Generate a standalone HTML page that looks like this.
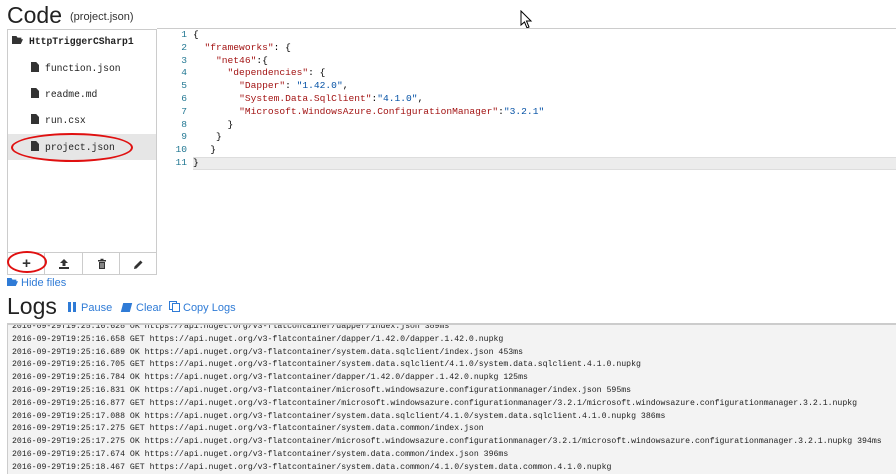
<!DOCTYPE html>
<html><head><meta charset="utf-8"><style>
*{margin:0;padding:0;box-sizing:border-box}
body{width:896px;height:474px;overflow:hidden;background:#fff;font-family:"Liberation Sans",sans-serif;position:relative;color:#222}
.abs{position:absolute}
.h1{font-size:23px;color:#222;font-weight:normal}
.sub{font-size:11px;color:#333}
.files{left:7px;top:29px;width:150px;height:246px;border:1px solid #ccc;border-top:1px solid #ccc}
.fi{position:absolute;font-family:"Liberation Mono",monospace;font-size:9.7px;color:#222}
.doc{display:inline-block;width:8px;height:10px;background:#333;clip-path:polygon(0 0,65% 0,100% 30%,100% 100%,0 100%);vertical-align:-1px;margin-right:6px}
.tb{position:absolute;top:252px;height:23px;border-top:1px solid #ccc;border-left:1px solid #ccc;width:38px;text-align:center;font-size:15px;line-height:22px;font-weight:bold;color:#333}
.code{font-family:"Liberation Mono",monospace;font-size:9.6px;line-height:12.8px}
.ln{color:#237893;text-align:right;width:20px;position:absolute;left:167px}
.s{color:#a31515}.v{color:#0451a5}
.logs{left:7px;top:323px;width:889px;height:151px;background:#f3f3f3;border-top:2px solid #ccc;border-left:1px solid #ccc;overflow:hidden;font-family:"Liberation Mono",monospace;font-size:8.2px;line-height:12.8px;color:#222;white-space:pre;padding-left:4px}
.blue{color:#2f7bd6;font-size:11px}
</style></head><body>
<div class="abs h1" style="left:7px;top:2px">Code</div>
<div class="abs sub" style="left:70px;top:11px">(project.json)</div>
<svg class="abs" style="left:520px;top:10px" width="14" height="20" viewBox="0 0 14 20"><path d="M1 1 L1 15 L4.5 12 L7 18 L9 17 L6.5 11 L11 11 Z" fill="#fff" stroke="#000" stroke-width="1"/></svg>
<div class="abs" style="left:157px;top:28px;width:739px;height:1px;background:#ccc"></div>
<div class="abs files"></div>
<div class="abs" style="left:8px;top:134px;width:148px;height:26px;background:#e6e6e6"></div>
<div class="fi" style="left:12px;top:36px;font-weight:bold"><span style="display:inline-block;width:11px;height:8px;background:#333;clip-path:polygon(0 0,40% 0,50% 20%,85% 20%,85% 40%,100% 40%,80% 100%,0 100%);margin-right:6px"></span>HttpTriggerCSharp1</div>
<div class="fi" style="left:31px;top:62px"><span class="doc"></span>function.json</div>
<div class="fi" style="left:31px;top:88px"><span class="doc"></span>readme.md</div>
<div class="fi" style="left:31px;top:114px"><span class="doc"></span>run.csx</div>
<div class="fi" style="left:31px;top:141px"><span class="doc"></span>project.json</div>
<div class="abs" style="left:11px;top:133px;width:122px;height:29px;border:2px solid #e01010;border-radius:50%"></div>
<div class="tb" style="left:7px">+</div>
<div class="tb" style="left:44px"><svg width="12" height="12" viewBox="0 0 12 12" style="vertical-align:-2px"><path d="M6 1 L10 5 L7.5 5 L7.5 8 L4.5 8 L4.5 5 L2 5Z M1 9 H11 V11 H1Z" fill="#333"/></svg></div>
<div class="tb" style="left:82px"><svg width="10" height="12" viewBox="0 0 10 12" style="vertical-align:-2px"><path d="M1 2 H9 V3.5 H1Z M2 4 H8 V11 H2Z M3.5 0.8 H6.5 V2 H3.5Z" fill="#333"/><path d="M4 5 V10 M6 5 V10" stroke="#fff" stroke-width="0.8"/></svg></div>
<div class="tb" style="left:119px;border-right:1px solid #ccc"><svg width="11" height="11" viewBox="0 0 11 11" style="vertical-align:-2px"><path d="M1 10 L1.5 7.5 L7.5 1.5 L9.5 3.5 L3.5 9.5Z" fill="#333"/></svg></div>
<div class="abs" style="left:8px;top:274px;width:148px;height:1px;background:#ccc"></div>
<div class="abs" style="left:7px;top:251px;width:40px;height:22px;border:2px solid #e01010;border-radius:50%"></div>
<div class="abs blue" style="left:7px;top:277px"><span style="display:inline-block;width:11px;height:8px;background:#2f7bd6;clip-path:polygon(0 0,40% 0,50% 20%,85% 20%,85% 40%,100% 40%,80% 100%,0 100%);margin-right:3px"></span>Hide files</div>
<div class="abs h1" style="left:7px;top:293px">Logs</div>
<div class="abs blue" style="left:68px;top:302px"><span style="display:inline-block;width:3px;height:10px;background:#2f7bd6;margin-right:2px;vertical-align:-1px"></span><span style="display:inline-block;width:3px;height:10px;background:#2f7bd6;margin-right:5px;vertical-align:-1px"></span>Pause</div>
<div class="abs blue" style="left:122px;top:302px"><span style="display:inline-block;width:9px;height:9px;background:#2f7bd6;transform:skewX(-15deg);margin-right:5px;vertical-align:-1px"></span>Clear</div>
<div class="abs blue" style="left:172px;top:302px"><span style="display:inline-block;width:8px;height:9px;border:1px solid #2f7bd6;margin-right:3px;vertical-align:-1px;box-shadow:-3px -2px 0 -1px #fff,-3px -2px 0 0 #2f7bd6"></span>Copy Logs</div>

<div class="abs" style="left:193px;top:157px;width:703px;height:13px;background:#ececec"></div>
<div class="abs" style="left:193px;top:157px;width:703px;height:1px;background:#ddd"></div>
<div class="abs" style="left:193px;top:169px;width:703px;height:1px;background:#ddd"></div>
<div class="abs code ln" style="top:29px">1<br>2<br>3<br>4<br>5<br>6<br>7<br>8<br>9<br>10<br>11</div>
<div class="abs code" style="left:193px;top:29px;white-space:pre;color:#000">{
  <span class="s">"frameworks"</span>: {
    <span class="s">"net46"</span>:{
      <span class="s">"dependencies"</span>: {
        <span class="s">"Dapper"</span>: <span class="v">"1.42.0"</span>,
        <span class="s">"System.Data.SqlClient"</span>:<span class="v">"4.1.0"</span>,
        <span class="s">"Microsoft.WindowsAzure.ConfigurationManager"</span>:<span class="v">"3.2.1"</span>
      }
    }
   }
}</div>
<div class="abs logs"><div style="margin-top:-4px">2016-09-29T19:25:16.628 OK https://api.nuget.org/v3-flatcontainer/dapper/index.json 389ms
2016-09-29T19:25:16.658 GET https://api.nuget.org/v3-flatcontainer/dapper/1.42.0/dapper.1.42.0.nupkg
2016-09-29T19:25:16.689 OK https://api.nuget.org/v3-flatcontainer/system.data.sqlclient/index.json 453ms
2016-09-29T19:25:16.705 GET https://api.nuget.org/v3-flatcontainer/system.data.sqlclient/4.1.0/system.data.sqlclient.4.1.0.nupkg
2016-09-29T19:25:16.784 OK https://api.nuget.org/v3-flatcontainer/dapper/1.42.0/dapper.1.42.0.nupkg 125ms
2016-09-29T19:25:16.831 OK https://api.nuget.org/v3-flatcontainer/microsoft.windowsazure.configurationmanager/index.json 595ms
2016-09-29T19:25:16.877 GET https://api.nuget.org/v3-flatcontainer/microsoft.windowsazure.configurationmanager/3.2.1/microsoft.windowsazure.configurationmanager.3.2.1.nupkg
2016-09-29T19:25:17.088 OK https://api.nuget.org/v3-flatcontainer/system.data.sqlclient/4.1.0/system.data.sqlclient.4.1.0.nupkg 386ms
2016-09-29T19:25:17.275 GET https://api.nuget.org/v3-flatcontainer/system.data.common/index.json
2016-09-29T19:25:17.275 OK https://api.nuget.org/v3-flatcontainer/microsoft.windowsazure.configurationmanager/3.2.1/microsoft.windowsazure.configurationmanager.3.2.1.nupkg 394ms
2016-09-29T19:25:17.674 OK https://api.nuget.org/v3-flatcontainer/system.data.common/index.json 396ms
2016-09-29T19:25:18.467 GET https://api.nuget.org/v3-flatcontainer/system.data.common/4.1.0/system.data.common.4.1.0.nupkg</div></div>
</body></html>
